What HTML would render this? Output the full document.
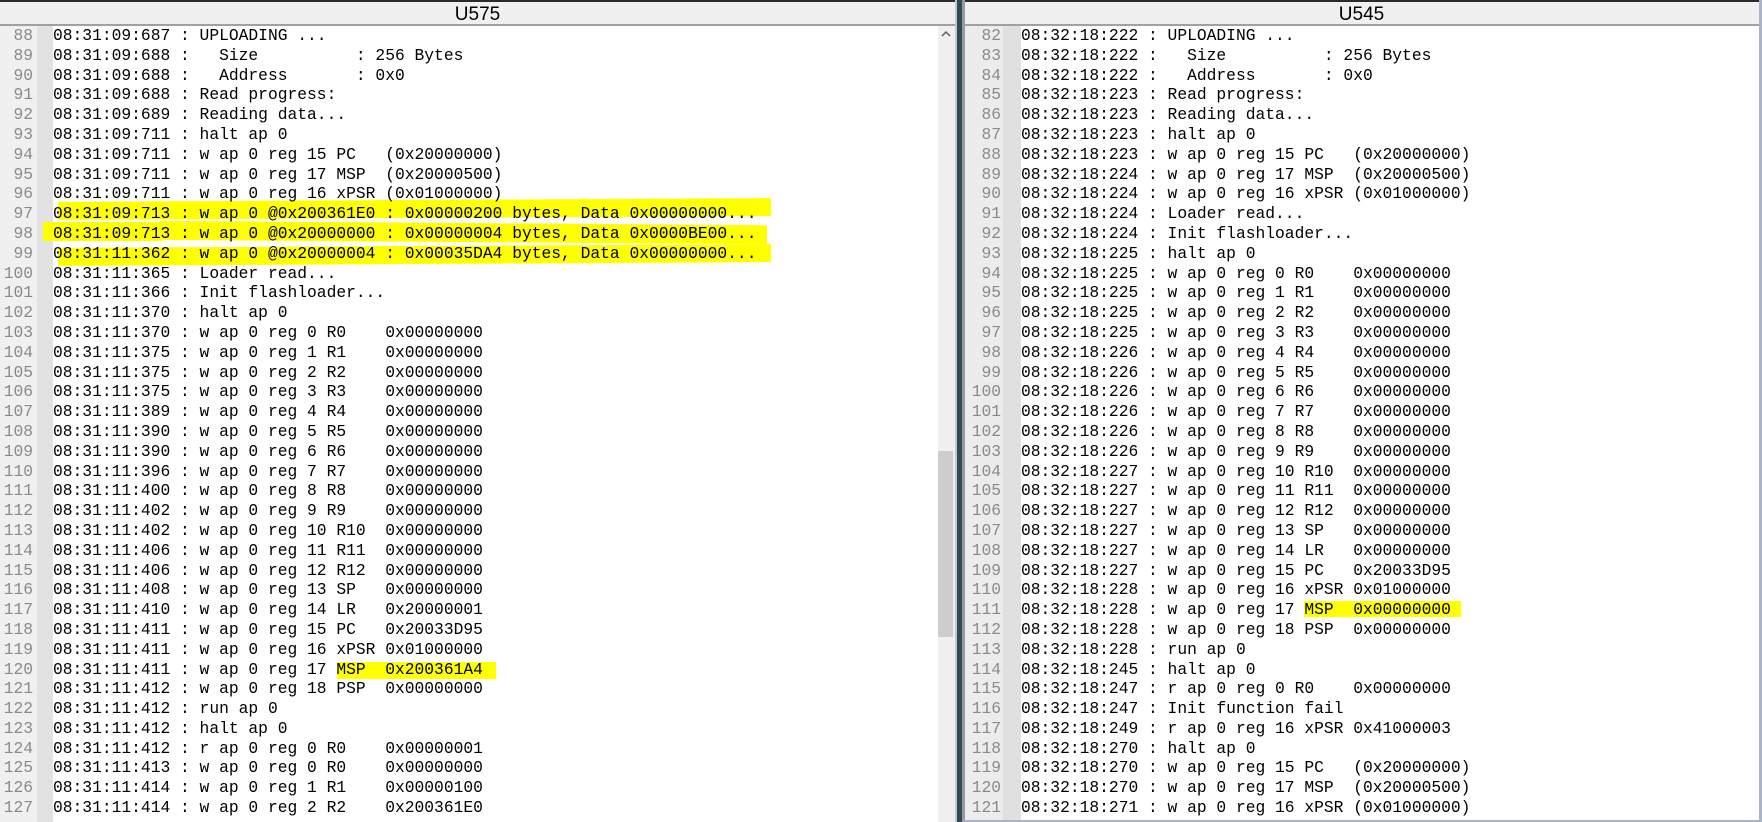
<!DOCTYPE html>
<html><head><meta charset="utf-8"><style>
*{margin:0;padding:0;box-sizing:border-box}
body{width:1762px;height:822px;overflow:hidden;background:#fff;position:relative;font-family:"Liberation Mono",monospace}
.abs{position:absolute}
pre{position:absolute;font-family:"Liberation Mono",monospace;font-size:16.3px;line-height:19.8px;color:#000;white-space:pre}
.num{color:#8a8a8a;text-align:right}
.hl{position:absolute;background:#ffff00}
.hdr{position:absolute;top:2px;height:23px;background:#f0f0f0;font-family:"Liberation Sans",sans-serif;font-size:19px;text-align:center;line-height:25px;color:#000}
</style></head><body>
<div class="abs" style="left:0;top:0;width:1762px;height:2px;background:#2b2b2b"></div>
<div class="hdr" style="left:0;width:955px">U575</div>
<div class="hdr" style="left:963px;width:797px">U545</div>
<div class="abs" style="left:0;top:24px;width:955px;height:2px;background:#a0a0a0"></div>
<div class="abs" style="left:963px;top:24px;width:799px;height:2px;background:#a0a0a0"></div>
<div class="abs" style="left:0;top:26px;width:37px;height:796px;background:#f0f0f0"></div>
<div class="abs" style="left:37px;top:26px;width:16px;height:796px;background:#e2e2e2"></div>
<div class="abs" style="left:938px;top:26px;width:17px;height:796px;background:#f0f0f0"></div>
<div class="abs" style="left:938px;top:451px;width:15px;height:186px;background:#cdcdcd"></div>
<svg class="abs" style="left:940px;top:30px" width="12" height="8"><path d="M2 6 L6 2 L10 6" fill="none" stroke="#606060" stroke-width="1.5"/></svg>
<div class="abs" style="left:955px;top:0;width:2px;height:822px;background:#c8c8c8"></div>
<div class="abs" style="left:957px;top:0;width:5px;height:822px;background:#2f4b55"></div>
<div class="abs" style="left:962px;top:0;width:3px;height:822px;background:#9a9a9a"></div>
<div class="abs" style="left:965px;top:26px;width:38px;height:796px;background:#ececec"></div>
<div class="abs" style="left:1003px;top:26px;width:18px;height:796px;background:#e0e0e0"></div>
<div class="abs" style="left:1759px;top:0;width:3px;height:822px;background:#a9b4c8"></div>
<div class="abs" style="left:963px;top:820px;width:799px;height:2px;background:#a9b4c8"></div>
<div class="hl" style="left:58px;top:200px;width:713px;height:18px;transform:skewY(-0.3deg)"></div>
<div class="hl" style="left:43px;top:222px;width:120px;height:19px"></div>
<div class="hl" style="left:160px;top:223px;width:607px;height:19px;transform:skewY(0.4deg)"></div>
<div class="hl" style="left:58px;top:246px;width:713px;height:18px;transform:skewY(-0.3deg)"></div>
<div class="hl" style="left:337px;top:662px;width:159px;height:17px"></div>
<div class="hl" style="left:1304px;top:601px;width:157px;height:16px"></div>
<pre class="num" style="left:0;top:26px;width:33px">88
89
90
91
92
93
94
95
96
97
98
99
100
101
102
103
104
105
106
107
108
109
110
111
112
113
114
115
116
117
118
119
120
121
122
123
124
125
126
127</pre>
<pre style="left:53px;top:26px">08:31:09:687 : UPLOADING ...
08:31:09:688 :   Size          : 256 Bytes
08:31:09:688 :   Address       : 0x0
08:31:09:688 : Read progress:
08:31:09:689 : Reading data...
08:31:09:711 : halt ap 0
08:31:09:711 : w ap 0 reg 15 PC   (0x20000000)
08:31:09:711 : w ap 0 reg 17 MSP  (0x20000500)
08:31:09:711 : w ap 0 reg 16 xPSR (0x01000000)
08:31:09:713 : w ap 0 @0x200361E0 : 0x00000200 bytes, Data 0x00000000...
08:31:09:713 : w ap 0 @0x20000000 : 0x00000004 bytes, Data 0x0000BE00...
08:31:11:362 : w ap 0 @0x20000004 : 0x00035DA4 bytes, Data 0x00000000...
08:31:11:365 : Loader read...
08:31:11:366 : Init flashloader...
08:31:11:370 : halt ap 0
08:31:11:370 : w ap 0 reg 0 R0    0x00000000
08:31:11:375 : w ap 0 reg 1 R1    0x00000000
08:31:11:375 : w ap 0 reg 2 R2    0x00000000
08:31:11:375 : w ap 0 reg 3 R3    0x00000000
08:31:11:389 : w ap 0 reg 4 R4    0x00000000
08:31:11:390 : w ap 0 reg 5 R5    0x00000000
08:31:11:390 : w ap 0 reg 6 R6    0x00000000
08:31:11:396 : w ap 0 reg 7 R7    0x00000000
08:31:11:400 : w ap 0 reg 8 R8    0x00000000
08:31:11:402 : w ap 0 reg 9 R9    0x00000000
08:31:11:402 : w ap 0 reg 10 R10  0x00000000
08:31:11:406 : w ap 0 reg 11 R11  0x00000000
08:31:11:406 : w ap 0 reg 12 R12  0x00000000
08:31:11:408 : w ap 0 reg 13 SP   0x00000000
08:31:11:410 : w ap 0 reg 14 LR   0x20000001
08:31:11:411 : w ap 0 reg 15 PC   0x20033D95
08:31:11:411 : w ap 0 reg 16 xPSR 0x01000000
08:31:11:411 : w ap 0 reg 17 MSP  0x200361A4
08:31:11:412 : w ap 0 reg 18 PSP  0x00000000
08:31:11:412 : run ap 0
08:31:11:412 : halt ap 0
08:31:11:412 : r ap 0 reg 0 R0    0x00000001
08:31:11:413 : w ap 0 reg 0 R0    0x00000000
08:31:11:414 : w ap 0 reg 1 R1    0x00000100
08:31:11:414 : w ap 0 reg 2 R2    0x200361E0</pre>
<pre class="num" style="left:963px;top:26px;width:38px">82
83
84
85
86
87
88
89
90
91
92
93
94
95
96
97
98
99
100
101
102
103
104
105
106
107
108
109
110
111
112
113
114
115
116
117
118
119
120
121</pre>
<pre style="left:1021px;top:26px">08:32:18:222 : UPLOADING ...
08:32:18:222 :   Size          : 256 Bytes
08:32:18:222 :   Address       : 0x0
08:32:18:223 : Read progress:
08:32:18:223 : Reading data...
08:32:18:223 : halt ap 0
08:32:18:223 : w ap 0 reg 15 PC   (0x20000000)
08:32:18:224 : w ap 0 reg 17 MSP  (0x20000500)
08:32:18:224 : w ap 0 reg 16 xPSR (0x01000000)
08:32:18:224 : Loader read...
08:32:18:224 : Init flashloader...
08:32:18:225 : halt ap 0
08:32:18:225 : w ap 0 reg 0 R0    0x00000000
08:32:18:225 : w ap 0 reg 1 R1    0x00000000
08:32:18:225 : w ap 0 reg 2 R2    0x00000000
08:32:18:225 : w ap 0 reg 3 R3    0x00000000
08:32:18:226 : w ap 0 reg 4 R4    0x00000000
08:32:18:226 : w ap 0 reg 5 R5    0x00000000
08:32:18:226 : w ap 0 reg 6 R6    0x00000000
08:32:18:226 : w ap 0 reg 7 R7    0x00000000
08:32:18:226 : w ap 0 reg 8 R8    0x00000000
08:32:18:226 : w ap 0 reg 9 R9    0x00000000
08:32:18:227 : w ap 0 reg 10 R10  0x00000000
08:32:18:227 : w ap 0 reg 11 R11  0x00000000
08:32:18:227 : w ap 0 reg 12 R12  0x00000000
08:32:18:227 : w ap 0 reg 13 SP   0x00000000
08:32:18:227 : w ap 0 reg 14 LR   0x00000000
08:32:18:227 : w ap 0 reg 15 PC   0x20033D95
08:32:18:228 : w ap 0 reg 16 xPSR 0x01000000
08:32:18:228 : w ap 0 reg 17 MSP  0x00000000
08:32:18:228 : w ap 0 reg 18 PSP  0x00000000
08:32:18:228 : run ap 0
08:32:18:245 : halt ap 0
08:32:18:247 : r ap 0 reg 0 R0    0x00000000
08:32:18:247 : Init function fail
08:32:18:249 : r ap 0 reg 16 xPSR 0x41000003
08:32:18:270 : halt ap 0
08:32:18:270 : w ap 0 reg 15 PC   (0x20000000)
08:32:18:270 : w ap 0 reg 17 MSP  (0x20000500)
08:32:18:271 : w ap 0 reg 16 xPSR (0x01000000)</pre>
</body></html>
